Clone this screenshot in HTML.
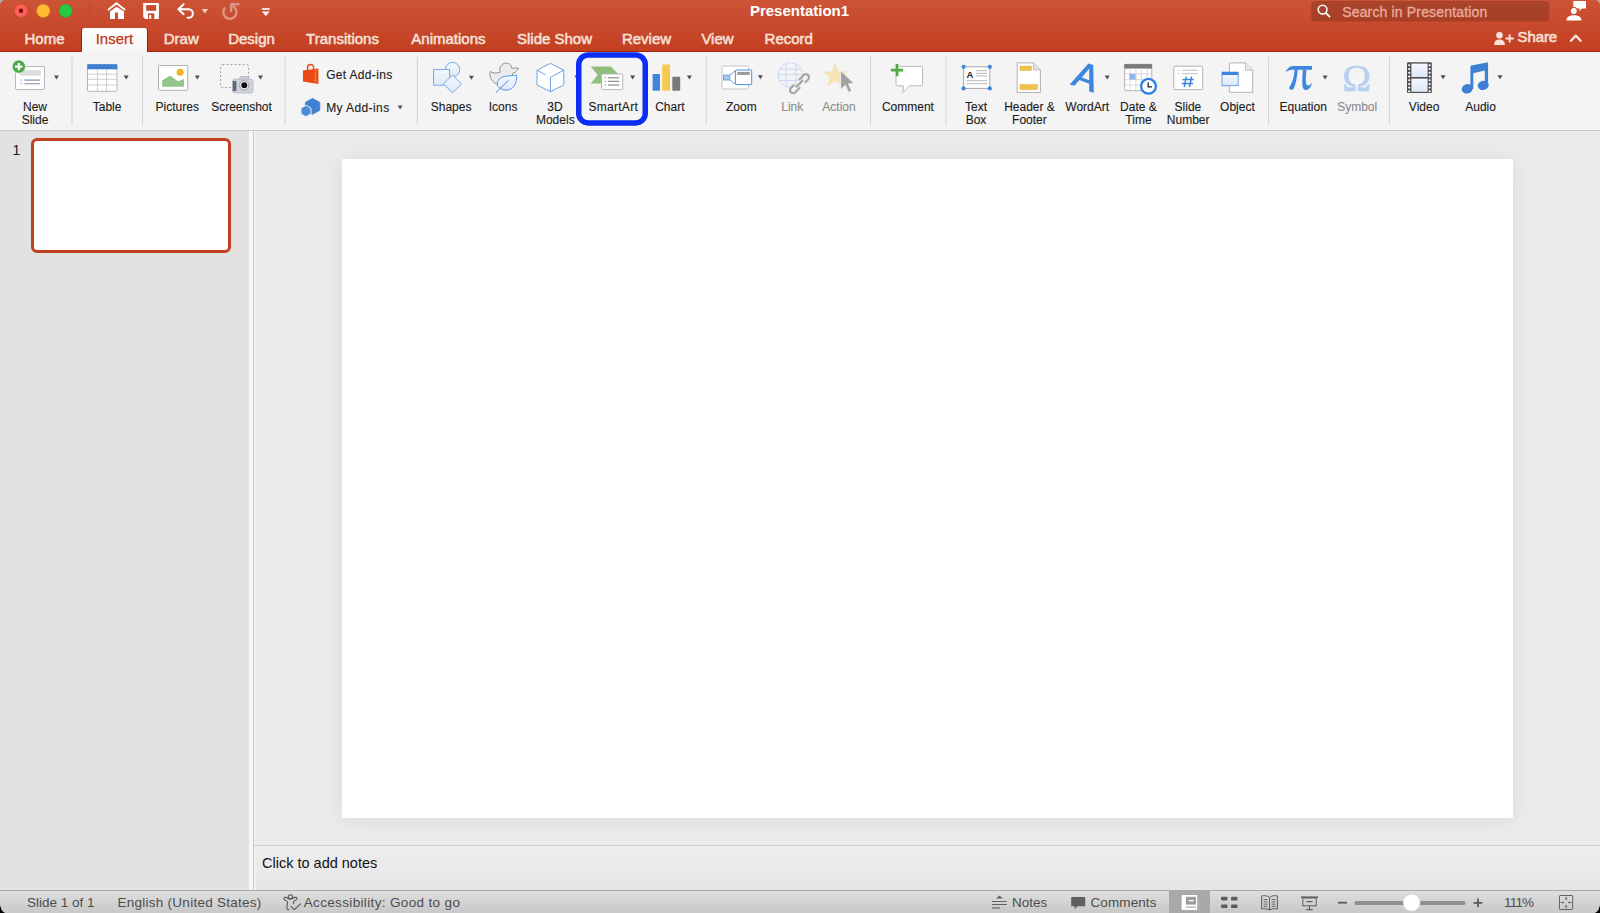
<!DOCTYPE html>
<html><head><meta charset="utf-8">
<style>
*{margin:0;padding:0;box-sizing:border-box}
html,body{width:1600px;height:913px;overflow:hidden;background:linear-gradient(#a9b0b0 0,#a9b0b0 450px,#000 450px)}
body{font-family:"Liberation Sans",sans-serif;position:relative}
#win{position:absolute;left:0;top:0;width:1600px;height:913px;border-radius:5px 5px 6px 6px / 5px 5px 11px 11px;overflow:hidden;background:#eaeaea}
#title{position:absolute;left:0;top:0;width:1600px;height:52px;background:linear-gradient(#cd5337,#c33f21)}
#tabline{position:absolute;left:0;top:51px;width:1600px;height:1px;background:#a8230f}
#instab{position:absolute;left:81px;top:28px;width:67px;height:24px;background:linear-gradient(#ffffff,#f5f5f5);border-radius:3px 3px 0 0;border-left:1px solid #a8170b;border-right:1px solid #a8170b}
#ribbon{position:absolute;left:0;top:52px;width:1600px;height:78px;background:#f4f4f4}
#ribbonline{position:absolute;left:0;top:130px;width:1600px;height:1px;background:#c9c9c9}
#leftp{position:absolute;left:0;top:131px;width:249px;height:759px;background:#e2e2e1}
#leftstrip{position:absolute;left:249px;top:131px;width:4px;height:759px;background:#f6f6f6}
#leftline{position:absolute;left:253px;top:131px;width:1px;height:759px;background:#cbcbcb}
#main{position:absolute;left:254px;top:131px;width:1346px;height:759px;background:#ebebeb;border-left:2px solid #f0f0f0}
#slide{position:absolute;left:342px;top:159px;width:1171px;height:659px;background:#fff;box-shadow:0 2px 20px rgba(0,0,0,0.075)}
#notesline{position:absolute;left:254px;top:845px;width:1346px;height:1px;background:#cdcdcd}
#status{position:absolute;left:0;top:890px;width:1600px;height:23px;background:linear-gradient(#dedede,#c8c8c8);border-top:1px solid #a9a9a9}
#notes{position:absolute;left:256px;top:846px;width:1344px;height:44px;background:linear-gradient(#eeeeee,#e6e6e6)}
#thumb{position:absolute;left:31px;top:138px;width:200px;height:115px;border:3px solid #c0401f;border-radius:6px;background:#fff}
#selview{position:absolute;left:1169px;top:891px;width:41px;height:22px;background:#a9a9a9}
svg{position:absolute;left:0;top:0}
.tab{font-size:15px;fill:#f8e2da;stroke:#f8e2da;stroke-width:0.5px}
.lbl{font-size:12px;fill:#1c1c1c;stroke:#1c1c1c;stroke-width:0.12px}
.gray{fill:#8c8c8c;stroke:#8c8c8c}
.st{font-size:13.5px;fill:#4d4d4d}
</style></head><body>
<div id="win">
<div id="title"></div>
<div id="tabline"></div>
<div id="instab"></div>
<div id="ribbon"></div>
<div id="ribbonline"></div>
<div id="leftp"></div>
<div id="leftstrip"></div>
<div id="leftline"></div>
<div id="main"></div>
<div id="slide"></div>
<div id="notesline"></div>
<div id="notes"></div>
<div id="status"></div>
<div id="selview"></div>
<div id="thumb"></div>

<!-- TITLE + TABS -->
<svg width="1600" height="52" viewBox="0 0 1600 52">
  <!-- traffic lights -->
  <circle cx="21" cy="10.8" r="6.6" fill="#fe5f57" stroke="#d8473c" stroke-width="0.6"/>
  <circle cx="21" cy="10.8" r="2.2" fill="#7e0508"/>
  <circle cx="43.3" cy="10.8" r="6.6" fill="#febc2e" stroke="#d9982a" stroke-width="0.6"/>
  <circle cx="65.6" cy="10.8" r="6.6" fill="#28c840" stroke="#1ea630" stroke-width="0.6"/>
  <rect x="89" y="2" width="1" height="17" fill="#b8452c" opacity="0.7"/>
  <!-- home -->
  <path d="M108.5 9.6 L116.5 3.3 L124.5 9.6" fill="none" stroke="#fff" stroke-width="1.9" stroke-linecap="round" stroke-linejoin="miter"/>
  <path d="M110 11.6 L116.5 6.8 L124 11.6 L124 19 L118 19 L118 12.4 L115 12.4 L115 19 L110 19 Z" fill="#fff"/>
  <!-- save -->
  <path d="M143.2 3 H158.9 V18.9 H145.2 L143.2 16.9 Z" fill="#fff"/>
  <rect x="146.2" y="5.1" width="10" height="5.7" fill="#c9492d"/>
  <rect x="148" y="13.4" width="6.3" height="5.5" fill="#c9492d"/>
  <rect x="149.2" y="15" width="2" height="3.9" fill="#fff"/>
  <!-- undo -->
  <path d="M183.6 4.2 L178.4 9.2 L183.6 14.2 M178.6 9.2 H188.6 A4.3 4.3 0 0 1 188.6 17.8 H187.5" fill="none" stroke="#fff" stroke-width="2" stroke-linecap="round" stroke-linejoin="round"/>
  <path d="M201.8 8.9 H208 L204.9 13.5 Z" fill="#f4d0c6"/>
  <!-- redo faded -->
  <path d="M224.6 8.2 A6.6 6.6 0 1 0 234.6 7.5 L231.6 4.6" fill="none" stroke="#df9484" stroke-width="2.4" stroke-linecap="round" stroke-linejoin="round"/>
  <path d="M238.6 4.3 H231.2 V11" fill="none" stroke="#df9484" stroke-width="2.4" stroke-linecap="round" stroke-linejoin="round"/>
  <!-- customize -->
  <rect x="261.9" y="8.2" width="7.8" height="1.6" fill="#fff"/>
  <path d="M261.9 11.5 H269.7 L265.8 16 Z" fill="#fff"/>
  <!-- title -->
  <text x="799.5" y="16.3" text-anchor="middle" font-size="15" font-weight="700" fill="#fff">Presentation1</text>
  <!-- search -->
  <rect x="1311.3" y="0.9" width="238" height="20.7" rx="4" fill="#000" opacity="0.17"/>
  <circle cx="1322.6" cy="9.6" r="4.4" fill="none" stroke="#fff" stroke-width="1.5"/>
  <path d="M1325.8 12.8 L1329.6 16.6" stroke="#fff" stroke-width="1.7" stroke-linecap="round"/>
  <text x="1342.2" y="16.8" font-size="14" fill="#e9aa9a" stroke="#e9aa9a" stroke-width="0.35" style="letter-spacing:0.16px">Search in Presentation</text>
  <!-- person + bubble -->
  <path d="M1573.3 1 H1586 V8.6 H1581.8 L1579.6 11.2 V8.6 H1573.3 Z" fill="#fff"/>
  <circle cx="1573.8" cy="11" r="3.5" fill="#fff" stroke="#c84c30" stroke-width="1.1"/>
  <path d="M1566.4 20.6 C1566.6 16.5 1569.5 15.2 1574 15.2 C1578.5 15.2 1581.3 16.5 1581.6 20.6 Z" fill="#fff"/>
  <!-- tabs -->
  <text class="tab" x="44.5" y="43.7" text-anchor="middle">Home</text>
  <text class="tab" x="114.4" y="43.7" text-anchor="middle" style="fill:#c23616;stroke:#c23616;stroke-width:0.25px">Insert</text>
  <text class="tab" x="181.25" y="43.7" text-anchor="middle">Draw</text>
  <text class="tab" x="251.5" y="43.7" text-anchor="middle">Design</text>
  <text class="tab" x="342.5" y="43.7" text-anchor="middle">Transitions</text>
  <text class="tab" x="448.4" y="43.7" text-anchor="middle">Animations</text>
  <text class="tab" x="554.5" y="43.7" text-anchor="middle">Slide Show</text>
  <text class="tab" x="646.5" y="43.7" text-anchor="middle">Review</text>
  <text class="tab" x="717.5" y="43.7" text-anchor="middle">View</text>
  <text class="tab" x="788.75" y="43.7" text-anchor="middle">Record</text>
  <!-- share -->
  <circle cx="1499.5" cy="35.3" r="3.3" fill="#f8e2da"/>
  <path d="M1494.2 45 C1494.3 40.8 1496 39.5 1499.5 39.5 C1503 39.5 1504.7 40.8 1504.9 45 Z" fill="#f8e2da"/>
  <path d="M1505.5 38.5 H1513.8 M1509.65 34.4 V42.6" stroke="#f8e2da" stroke-width="1.9"/>
  <text x="1517.5" y="41.6" font-size="15" fill="#f8e2da" stroke="#f8e2da" stroke-width="0.55" style="letter-spacing:-0.1px">Share</text>
  <path d="M1571 40.8 L1575.8 35.6 L1580.6 40.8" fill="none" stroke="#f8e2da" stroke-width="2.3" stroke-linecap="round" stroke-linejoin="round"/>
</svg>

<!-- RIBBON -->
<svg width="1600" height="131" viewBox="0 0 1600 131">
  <defs>
    <path id="dd" d="M0 0 H5 L2.5 4 Z" fill="#4f4f4f"/>
    <linearGradient id="lb" x1="0" y1="0" x2="0" y2="1"><stop offset="0" stop-color="#f4f8fd"/><stop offset="1" stop-color="#dce8f8"/></linearGradient>
  </defs>
  <g fill="#d3d3d3">
    <rect x="71.5" y="57" width="1" height="68"/>
    <rect x="142" y="57" width="1" height="68"/>
    <rect x="284.5" y="57" width="1" height="68"/>
    <rect x="416.8" y="57" width="1" height="68"/>
    <rect x="705.7" y="57" width="1" height="68"/>
    <rect x="870" y="57" width="1" height="68"/>
    <rect x="945.5" y="57" width="1" height="68"/>
    <rect x="1268.1" y="57" width="1" height="68"/>
    <rect x="1388.9" y="57" width="1" height="68"/>
  </g>
  <!-- dropdowns -->
  <use href="#dd" x="54" y="75.4"/>
  <use href="#dd" x="123.7" y="75.4"/>
  <use href="#dd" x="194.8" y="75.5"/>
  <use href="#dd" x="258" y="75.5"/>
  <use href="#dd" x="397.6" y="105.6"/>
  <use href="#dd" x="468.9" y="75.7"/>
  <use href="#dd" x="574.4" y="75.5"/>
  <use href="#dd" x="630.1" y="75.6"/>
  <use href="#dd" x="686.9" y="75.6"/>
  <use href="#dd" x="757.9" y="75.2"/>
  <use href="#dd" x="1104.7" y="75.6"/>
  <use href="#dd" x="1322.6" y="75.6"/>
  <use href="#dd" x="1440.6" y="75.2"/>
  <use href="#dd" x="1497.5" y="75.2"/>

  <!-- New Slide -->
  <rect x="15.5" y="66.5" width="29" height="23" rx="1.5" fill="#fff" stroke="#b8b8b8"/>
  <rect x="20" y="70.6" width="20.5" height="4.6" rx="1" fill="#dedfe2" stroke="#d0d0d0" stroke-width="0.6"/>
  <rect x="20.3" y="79.6" width="2" height="1" fill="#a8b3c6"/>
  <rect x="20.3" y="83.2" width="2" height="1" fill="#a8b3c6"/>
  <rect x="24.5" y="79.5" width="15.5" height="1.2" fill="#7d8fb0"/>
  <rect x="24.5" y="83.1" width="15.5" height="1.2" fill="#9aa0aa"/>
  <circle cx="18.8" cy="66.6" r="6.7" fill="#4fa847" stroke="#f4f4f4" stroke-width="0.8"/>
  <path d="M18.8 62.9 V70.3 M15.1 66.6 H22.5" stroke="#fff" stroke-width="2.2"/>

  <!-- Table -->
  <rect x="87.5" y="64.5" width="29.5" height="26.8" rx="1" fill="#fff" stroke="#b4b4b4"/>
  <g stroke="#c9c9c9" stroke-width="0.9">
    <path d="M97.5 69.5 V91 M106.5 69.5 V91 M88 74.2 H116.5 M88 79.3 H116.5 M88 84.9 H116.5"/>
  </g>
  <rect x="87.3" y="64.3" width="29.9" height="5" fill="#3e7fd2"/>

  <!-- Pictures -->
  <rect x="158.5" y="65.5" width="29.3" height="24.8" rx="0.8" fill="#fff" stroke="#b1b1b1"/>
  <path d="M162.2 86.8 V80.6 L170 75.4 L177.9 81.2 L184.1 79 V86.8 Z" fill="#93c68b"/>
  <circle cx="180.1" cy="72.2" r="3.2" fill="#f2b81f" stroke="#e6a40e" stroke-width="0.6"/>

  <!-- Screenshot -->
  <rect x="220.6" y="64.6" width="28" height="23" rx="2" fill="none" stroke="#9c9c9c" stroke-width="1" stroke-dasharray="2 2"/>
  <rect x="239.8" y="76.6" width="9" height="4" rx="1.2" fill="#cfd2d9" stroke="#a9aebb" stroke-width="0.7"/>
  <rect x="232.5" y="79.2" width="20.5" height="13.8" rx="2" fill="#cfd2d9" stroke="#a9b1c2" stroke-width="0.7"/>
  <rect x="232.8" y="81" width="3.6" height="10" fill="#5f687c"/>
  <circle cx="244.3" cy="85.3" r="4.6" fill="#fff" stroke="#8d8d8d" stroke-width="0.9"/>
  <circle cx="244.3" cy="85.3" r="3" fill="#0d0d0d"/>

  <!-- Get Add-ins -->
  <path d="M307.6 70.4 V67.4 A3 3 0 0 1 313.6 67.4 V69.6" fill="none" stroke="#ea4a12" stroke-width="1.5"/>
  <path d="M303 70.6 L318.4 68.6 V84 L303 81.6 Z" fill="#ea4a12"/>
  <path d="M315.3 70 V82.5" stroke="#fbd3c2" stroke-width="0.8" stroke-dasharray="1.2 0.8"/>
  <text class="lbl" x="326.2" y="78.7" style="letter-spacing:0.33px">Get Add-ins</text>
  <!-- My Add-ins -->
  <path d="M312.6 98.4 L319.8 102.3 V110.3 L312.6 114.3 L305.4 110.3 V102.3 Z" fill="#3f80d2" stroke="#3f80d2" stroke-width="0.8" stroke-linejoin="round"/>
  <path d="M306 105.3 L311 108.1 V113.9 L306 116.7 L301 113.9 V108.1 Z" fill="#4c8bd8" stroke="#f4f4f4" stroke-width="0.9" stroke-linejoin="round"/>
  <text class="lbl" x="326.2" y="112" style="letter-spacing:0.4px">My Add-ins</text>

  <!-- Shapes -->
  <circle cx="452.5" cy="69.6" r="7.2" fill="url(#lb)" stroke="#6da2e8" stroke-width="0.9"/>
  <rect x="433.6" y="69.6" width="16" height="15.6" fill="url(#lb)" stroke="#6da2e8" stroke-width="0.9"/>
  <path d="M452.5 74.8 L461.5 83.9 L452.5 93 L443.5 83.9 Z" fill="url(#lb)" stroke="#6da2e8" stroke-width="0.9" stroke-linejoin="round"/>

  <!-- Icons -->
  <path d="M490 71.5 C493 73.5 497 73.5 500.5 72 C499 70.5 499.5 64.6 504.6 63.3 C508.6 62.3 511.6 65 511.8 68.3 C514 68.3 516.5 67.6 518.5 68.3 C517.5 71 514.3 73 512 73.8 C513 75 513.6 76.5 513.6 77.8 C513 82.5 508.5 85.5 501.5 85 C494 84.6 489 79.5 490 71.5 Z" fill="#ececec" stroke="#888" stroke-width="0.9" stroke-linejoin="round"/>
  <path d="M497.5 86 C496 80 501 76.5 507 76 C511 75.8 514.5 75.5 516.6 74.9 C516.8 80 516 85.5 511.5 88.6 C507.6 91 502 91 497.5 86 Z" fill="url(#lb)" stroke="#4b8ee2" stroke-width="0.9" stroke-linejoin="round"/>
  <path d="M496 92.6 L508.5 80.2" stroke="#3a80dc" stroke-width="0.9" stroke-linecap="round"/>

  <!-- 3D Models -->
  <path d="M550.4 63.4 L563.8 70.2 V85 L550.4 91.6 L537 85 V70.2 Z" fill="#fff" stroke="#5c9ae6" stroke-width="0.9" stroke-linejoin="round"/>
  <path d="M537 70.2 L545.6 74.8 M550.4 77.4 L563.8 70.2 M550.4 77.4 V91.6" fill="none" stroke="#5c9ae6" stroke-width="0.9"/>

  <!-- SmartArt -->
  <path d="M590.8 66.6 H611 L618.9 75 L611 83.5 H590.8 L597.6 75 Z" fill="#8fbf7b"/>
  <rect x="601.5" y="74" width="21.2" height="15.6" rx="1.2" fill="#fff" stroke="#b5b5b5"/>
  <g fill="#8e8e8e">
    <rect x="604.7" y="77.3" width="1.6" height="1"/><rect x="608" y="77.2" width="11.4" height="1.2"/>
    <rect x="604.7" y="80.9" width="1.6" height="1"/><rect x="608" y="80.8" width="11.4" height="1.2"/>
    <rect x="604.7" y="84.5" width="1.6" height="1"/><rect x="608" y="84.4" width="11.4" height="1.2"/>
  </g>

  <!-- Chart -->
  <rect x="652.6" y="73.9" width="7.4" height="16.9" rx="0.8" fill="#3d86dc"/>
  <rect x="662.2" y="64.4" width="7.8" height="26.4" rx="0.8" fill="#f5cb4f"/>
  <rect x="672.3" y="76.7" width="7.9" height="14.1" rx="0.8" fill="#7a7a7a"/>

  <!-- Zoom -->
  <rect x="722" y="66" width="26.6" height="23" rx="1.5" fill="#fff" stroke="#c6c6c6"/>
  <path d="M729.8 75.2 L735.4 70.6 M729.8 80 L735.4 84.2" stroke="#5593e2" stroke-width="0.9"/>
  <rect x="735.4" y="70" width="16.3" height="14.6" rx="0.8" fill="#fff" stroke="#4e8fe0"/>
  <rect x="737.2" y="71.9" width="12.6" height="3" fill="#9a9a9a"/>
  <rect x="723.6" y="75.1" width="6.2" height="4.9" fill="#a9c7ef" stroke="#4e8fe0" stroke-width="0.8"/>

  <!-- Link -->
  <g fill="none" stroke="#bcd4f2" stroke-width="0.8">
    <circle cx="790.5" cy="75" r="12.3"/>
    <path d="M786.8 63.4 C785.5 68 785.5 82 786.8 86.6 M795.2 63.6 C796.3 68 796.3 82 795.2 86.4 M779.8 69.2 H800.5 M778.4 74.6 H801.5 M780 80.6 H798"/>
  </g>
  <g fill="none" stroke="#a8a8a8" stroke-width="2.3" stroke-linecap="round">
    <path transform="translate(804.2 79) rotate(-45)" d="M-3.6 -3.1 H2.4 A3.1 3.1 0 0 1 2.4 3.1 H-1.2"/>
    <path transform="translate(794.8 88.4) rotate(-45)" d="M3.6 3.1 H-2.4 A3.1 3.1 0 0 1 -2.4 -3.1 H1.2"/>
    <path d="M796.6 86.6 L802.4 80.8"/>
    
  </g>

  <!-- Action -->
  <path d="M835 62.1 L838.2 71.4 L847.9 71.5 L840.1 77.3 L843 86.6 L835 81 L827 86.6 L829.9 77.3 L822.1 71.5 L831.8 71.4 Z" fill="#f4e3b6"/>
  <path d="M840.6 70.6 L854.1 83.6 L848.4 83.8 L851.6 91 L848.6 92.4 L845.4 85.2 L840.8 89.5 Z" fill="#a0a0a0" stroke="#f4f4f4" stroke-width="0.8" stroke-linejoin="round"/>

  <!-- Comment -->
  <path d="M897.5 66.4 H921 Q922.6 66.4 922.6 68 V84.2 Q922.6 85.8 921 85.8 H909.5 L903.2 92.4 V85.8 H897.6 Q896 85.8 896 84.2 V68 Q896 66.4 897.5 66.4 Z" fill="#fff" stroke="#b9b9b9"/>
  <path d="M897 64 V76.2 M890.9 70.1 H903.1" stroke="#f4f4f4" stroke-width="4.6"/>
  <path d="M897 64 V76.2 M890.9 70.1 H903.1" stroke="#52ad46" stroke-width="2.8"/>

  <!-- Text Box -->
  <rect x="963.6" y="66.8" width="26.2" height="21.6" fill="#fff" stroke="#a8a8a8"/>
  <text x="966.6" y="77.6" font-size="9.5" font-weight="700" fill="#222">A</text>
  <g fill="#b7b7b7">
    <rect x="976" y="70.2" width="11" height="1"/><rect x="976" y="72.8" width="11" height="1"/><rect x="976" y="75.4" width="11" height="1"/>
    <rect x="966.5" y="80.2" width="20.5" height="1"/><rect x="966.5" y="83.2" width="20.5" height="1"/>
  </g>
  <g fill="#3c86e0">
    <circle cx="963.6" cy="66.8" r="2.1"/><circle cx="989.8" cy="66.8" r="2.1"/>
    <circle cx="963.6" cy="88.4" r="2.1"/><circle cx="989.8" cy="88.4" r="2.1"/>
  </g>

  <!-- Header & Footer -->
  <path d="M1017.2 62.9 H1033.6 L1040.4 69.8 V92.4 H1017.2 Z" fill="#fff" stroke="#b0b0b0"/>
  <path d="M1033.6 62.9 V69.8 H1040.4" fill="#e6e6e6" stroke="#b0b0b0" stroke-width="0.8"/>
  <rect x="1020" y="66.1" width="11.3" height="4.4" fill="#f0c24b" stroke="#dcab3b" stroke-width="0.5"/>
  <rect x="1020" y="84.6" width="17.3" height="5" fill="#f0c24b" stroke="#dcab3b" stroke-width="0.5"/>

  <!-- WordArt -->
  <path d="M1088.4 63.4 L1093.2 65.1 L1093.8 92.7 L1089.2 91.5 V83.7 L1079.4 80.1 L1074.4 85.8 L1069.7 84.4 Z M1089.2 68.7 L1081.7 77.4 L1089.2 80.2 Z" fill="#3d87de" fill-rule="evenodd"/>

  <!-- Date & Time -->
  <rect x="1124.6" y="64.3" width="27.2" height="26.4" rx="1" fill="#fff" stroke="#b3b3b3"/>
  <rect x="1124.4" y="64.1" width="27.6" height="4.5" fill="#7a7a7a"/>
  <g stroke="#d0d0d0" stroke-width="0.8">
    <path d="M1130 68.6 V90.5 M1135.9 68.6 V90.5 M1141.5 68.6 V90.5 M1147 68.6 V90.5 M1125 73.8 H1151.6 M1125 79.6 H1151.6 M1125 85 H1151.6"/>
  </g>
  <rect x="1129.4" y="73.9" width="6.2" height="5.7" fill="#8fb5ec"/>
  <circle cx="1148.5" cy="86.3" r="7.4" fill="#fff" stroke="#2c7fe2" stroke-width="2.3"/>
  <path d="M1148.2 82.3 V86.9 H1152" fill="none" stroke="#222" stroke-width="1.3"/>

  <!-- Slide Number -->
  <rect x="1173.8" y="66.2" width="28.9" height="23.4" rx="1" fill="#fff" stroke="#b3b3b3"/>
  <g fill="#c1c6cf">
    <rect x="1177.7" y="69.8" width="2" height="0.9"/><rect x="1182" y="69.7" width="16" height="1.1"/>
    <rect x="1177.7" y="73.2" width="2" height="0.9"/><rect x="1182" y="73.1" width="16" height="1.1"/>
  </g>
  <path d="M1186.3 76.6 L1184.2 87 M1191.6 76.6 L1189.5 87 M1182.5 79.6 H1193.8 M1181.8 83.6 H1193.1" stroke="#3b86dc" stroke-width="1.5"/>

  <!-- Object -->
  <path d="M1229.4 62.9 H1245.4 L1252.7 70.2 V92.3 H1229.4 Z" fill="#fff" stroke="#b3b3b3"/>
  <path d="M1245.4 62.9 V70.2 H1252.7" fill="#ececec" stroke="#b3b3b3" stroke-width="0.8"/>
  <rect x="1222" y="72.1" width="16.2" height="13.6" fill="url(#lb)" stroke="#4b8fe2" stroke-width="0.8"/>
  <rect x="1222" y="72" width="16.2" height="3" fill="#3b86dc"/>

  <!-- Equation -->
  <g fill="#3d87de">
    <path d="M1285.4 72.6 C1287.5 68.5 1289.5 66.3 1293 66.1 H1312 V69.8 H1292.5 C1289.5 69.8 1287.6 70.6 1285.4 72.6 Z"/>
    <path d="M1294.6 69.6 H1297.7 C1297.1 78 1295.6 85 1293.7 88.5 C1292.6 90.3 1289.8 90.3 1289.4 88.6 C1289.1 87.2 1290.4 85.5 1291.4 83.5 C1293.1 80 1294.3 75 1294.6 69.6 Z"/>
    <path d="M1302.8 69.6 H1306.6 C1305.9 75 1305.6 79 1305.9 82.5 C1306.3 85.5 1308.1 86.4 1310.1 84.7 L1312.1 82.8 C1311.1 86.5 1309.1 89.9 1306.3 90 C1303.5 90.1 1302.3 87.5 1302.3 83 C1302.3 78 1302.6 74 1302.8 69.6 Z"/>
  </g>

  <!-- Symbol -->
  <text x="1356.6" y="90.6" text-anchor="middle" font-family="Liberation Serif" font-size="38.5" fill="#b7d0f0" stroke="#b7d0f0" stroke-width="0.6">&#937;</text>

  <!-- Video -->
  <rect x="1407" y="62.2" width="24.8" height="30.9" rx="1.2" fill="#4f4f4f"/>
  <rect x="1411.4" y="63.6" width="16.2" height="13.4" fill="url(#lb)"/>
  <rect x="1411.4" y="78.6" width="16.2" height="13.2" fill="url(#lb)"/>
  <g fill="#fff"><rect x="1408.2" y="64.30" width="2" height="2" rx="0.7"/><rect x="1428.6" y="64.30" width="2" height="2" rx="0.7"/><rect x="1408.2" y="68.02" width="2" height="2" rx="0.7"/><rect x="1428.6" y="68.02" width="2" height="2" rx="0.7"/><rect x="1408.2" y="71.74" width="2" height="2" rx="0.7"/><rect x="1428.6" y="71.74" width="2" height="2" rx="0.7"/><rect x="1408.2" y="75.46" width="2" height="2" rx="0.7"/><rect x="1428.6" y="75.46" width="2" height="2" rx="0.7"/><rect x="1408.2" y="79.18" width="2" height="2" rx="0.7"/><rect x="1428.6" y="79.18" width="2" height="2" rx="0.7"/><rect x="1408.2" y="82.90" width="2" height="2" rx="0.7"/><rect x="1428.6" y="82.90" width="2" height="2" rx="0.7"/><rect x="1408.2" y="86.62" width="2" height="2" rx="0.7"/><rect x="1428.6" y="86.62" width="2" height="2" rx="0.7"/><rect x="1408.2" y="90.34" width="2" height="2" rx="0.7"/><rect x="1428.6" y="90.34" width="2" height="2" rx="0.7"/></g>

  <!-- Audio -->
  <path d="M1470.4 66.4 Q1470.6 65.6 1471.5 65.4 L1488.1 62.2 V86 H1484.8 V70.6 L1473.3 73.2 V89 H1470.4 Z" fill="#3e80d3"/>
  <ellipse cx="1467.2" cy="88.8" rx="5.6" ry="4.6" fill="#3e80d3" transform="rotate(-15 1467.2 88.8)"/>
  <ellipse cx="1483.2" cy="85.4" rx="5.6" ry="4.6" fill="#3e80d3" transform="rotate(-15 1483.2 85.4)"/>

  <!-- labels -->
  <g class="lbl" text-anchor="middle">
    <text x="35" y="111">New</text><text x="35" y="124.2">Slide</text>
    <text x="107.1" y="111">Table</text>
    <text x="177.25" y="111">Pictures</text>
    <text x="241.5" y="111">Screenshot</text>
    <text x="451.1" y="111">Shapes</text>
    <text x="503.1" y="111">Icons</text>
    <text x="555" y="111">3D</text><text x="555.3" y="124.2">Models</text>
    <text x="613.25" y="111" style="letter-spacing:0.28px">SmartArt</text>
    <text x="669.8" y="111">Chart</text>
    <text x="741.35" y="111">Zoom</text>
    <text x="792.25" y="111" class="gray">Link</text>
    <text x="839" y="111" class="gray">Action</text>
    <text x="907.9" y="111">Comment</text>
    <text x="976" y="111">Text</text><text x="976" y="124.2">Box</text>
    <text x="1029.5" y="111">Header &amp;</text><text x="1029.45" y="124.2">Footer</text>
    <text x="1087.2" y="111">WordArt</text>
    <text x="1138.45" y="111">Date &amp;</text><text x="1138.45" y="124.2">Time</text>
    <text x="1187.9" y="111">Slide</text><text x="1188.2" y="124.2">Number</text>
    <text x="1237.4" y="111">Object</text>
    <text x="1303.2" y="111">Equation</text>
    <text x="1357.2" y="111" class="gray">Symbol</text>
    <text x="1424.1" y="111">Video</text>
    <text x="1480.6" y="111">Audio</text>
  </g>

  <!-- highlight -->
  <rect x="578.75" y="54.95" width="66.5" height="68" rx="9.5" fill="none" stroke="#0b2ef2" stroke-width="5.5"/>
</svg>

<!-- STATUS ICONS -->
<svg width="1600" height="913" viewBox="0 0 1600 913">
  <g fill="none" stroke="#585858" stroke-width="1.1" stroke-linecap="round" stroke-linejoin="round">
    <circle cx="290.4" cy="896.8" r="2.1"/>
    <path d="M293.6 903.8 V902 C293.7 900.6 295.6 900.6 296.6 899.4 C297.8 897.6 295.8 896.5 294.3 897.5 C293.2 898.3 292 899 290.4 899 C288.8 899 287.6 898.3 286.5 897.5 C285 896.5 283 897.6 284.2 899.4 C285.2 900.6 287.2 900.6 287.4 902 C287.6 904 287.2 906 286.9 907.5 C286.6 909.4 287.8 910 288.8 909.6"/>
    <path d="M291 906.4 L294.4 909.6 L300.5 903.8"/>
  </g>
  <!-- notes -->
  <path d="M999.5 895.4 L1003 898.6 H996 Z" fill="#606060"/>
  <rect x="992" y="901" width="14.8" height="1" fill="#606060"/>
  <rect x="992" y="904" width="14.8" height="1" fill="#606060"/>
  <rect x="992" y="907.3" width="7.8" height="1.3" fill="#707070"/>
  <!-- comments -->
  <path d="M1071.7 897 H1084.7 Q1085.2 897 1085.2 897.5 V905.8 Q1085.2 906.3 1084.7 906.3 H1077.5 L1074.5 909.2 V906.3 H1071.7 Q1071.2 906.3 1071.2 905.8 V897.5 Q1071.2 897 1071.7 897 Z" fill="#5f5f5f"/>
  <!-- normal view -->
  <rect x="1181.6" y="895" width="15.6" height="15" rx="1" fill="#fff"/>
  <rect x="1186" y="896.8" width="10" height="7.8" fill="#9c9c9c"/>
  <rect x="1188.8" y="899.9" width="5" height="1.4" fill="#fff"/>
  <rect x="1186" y="906.6" width="10" height="1" fill="#9c9c9c"/>
  <!-- sorter -->
  <g fill="#5c5c5c">
    <rect x="1221" y="896.8" width="6.5" height="3.7" rx="1"/><rect x="1231" y="896.8" width="6.5" height="3.7" rx="1"/>
    <rect x="1221" y="904.4" width="6.5" height="3.7" rx="1"/><rect x="1231" y="904.4" width="6.5" height="3.7" rx="1"/>
  </g>
  <!-- reading -->
  <g fill="none" stroke="#5c5c5c" stroke-width="1">
    <path d="M1269.5 897.5 C1267.5 895.6 1264 895.3 1261.6 896 V909 C1264 908.3 1267.5 908.6 1269.5 910 C1271.5 908.6 1275 908.3 1277.4 909 V896 C1275 895.3 1271.5 895.6 1269.5 897.5 Z M1269.5 897.5 V910"/>
    <path d="M1263.5 899.5 H1267.5 M1263.5 901.8 H1267.5 M1263.5 904.1 H1267.5 M1263.5 906.3 H1267.5 M1271.5 899.5 H1275.5 M1271.5 901.8 H1275.5 M1271.5 904.1 H1275.5 M1271.5 906.3 H1275.5" stroke-width="0.9"/>
  </g>
  <!-- presenter -->
  <g fill="none" stroke="#5c5c5c">
    <path d="M1301 897.2 H1318" stroke-width="1.5"/>
    <rect x="1302.8" y="898" width="13.4" height="7.8" stroke-width="1"/>
    <path d="M1306.5 901.6 H1312.5 M1309.5 905.8 V909.3 M1306.3 909.6 H1312.7" stroke-width="1.1"/>
  </g>
  <!-- zoom slider -->
  <rect x="1338" y="901.8" width="9" height="1.8" fill="#5a5a5a"/>
  <rect x="1354.4" y="901" width="111.2" height="4" rx="2" fill="#8f8f8f"/>
  <circle cx="1411.6" cy="902.6" r="8.6" fill="#fff" stroke="#c9c9c9" stroke-width="0.5"/>
  <path d="M1473.6 902.8 H1482.4 M1478 898.6 V907" stroke="#5a5a5a" stroke-width="1.8"/>
  <!-- fit -->
  <rect x="1559.5" y="895.5" width="13.2" height="14" rx="0.8" fill="none" stroke="#606060" stroke-width="1"/>
  <g stroke="#606060" stroke-width="0.8" fill="none">
    <path d="M1566.1 896.5 V899.5 M1566.1 905.5 V908.5 M1560.5 902.5 H1563.5 M1568.7 902.5 H1571.7"/>
  </g>
  <g fill="#606060">
    <path d="M1564.8 898.6 H1567.4 L1566.1 900.3 Z"/><path d="M1564.8 906.4 H1567.4 L1566.1 904.7 Z"/>
    <path d="M1562.6 901.2 V903.8 L1564.3 902.5 Z"/><path d="M1569.6 901.2 V903.8 L1567.9 902.5 Z"/>
  </g>
</svg>
<!-- MAIN TEXT -->
<svg width="1600" height="913" viewBox="0 0 1600 913" style="pointer-events:none">
  <text x="12.5" y="155.2" font-size="14" fill="#222">1</text>
  <text x="262" y="868.2" font-size="14.5" fill="#111">Click to add notes</text>
  <!-- status -->
  <text class="st" x="27" y="907.3">Slide 1 of 1</text>
  <text class="st" x="117.5" y="907.3" style="letter-spacing:0.26px">English (United States)</text>
  <text class="st" x="303.7" y="907.3" style="letter-spacing:0.35px">Accessibility: Good to go</text>
  <text class="st" x="1012" y="907.3">Notes</text>
  <text class="st" x="1090.5" y="907.3" style="letter-spacing:0.1px">Comments</text>
  <text class="st" x="1504" y="907.3" style="letter-spacing:-0.8px">111%</text>
</svg>
</div>
</body></html>
